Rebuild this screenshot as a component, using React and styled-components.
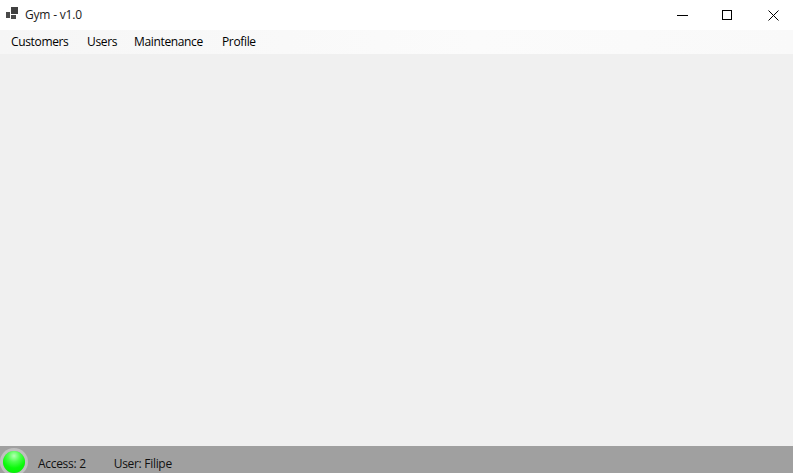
import React from 'react'
import styled, { createGlobalStyle } from 'styled-components'

const GlobalStyle = createGlobalStyle`
  html, body, #root {
    margin: 0;
    height: 100%;
  }
  body {
    overflow: hidden;
    font-family: 'Open Sans', 'Liberation Sans', sans-serif;
    font-size: 12px;
    color: #000;
  }
`

const Window = styled.div`
  display: flex;
  flex-direction: column;
  height: 100%;
  background: #f0f0f0;
`

const TitleBar = styled.div`
  display: flex;
  align-items: center;
  justify-content: space-between;
  height: 30px;
  flex-shrink: 0;
  background: #fff;
`

const TitleLeft = styled.div`
  display: flex;
  align-items: flex-start;
  gap: 6px;
  padding: 7px 0 0 6px;
  height: 30px;
  box-sizing: border-box;
`

const Title = styled.span`
  margin-top: -1px;
  color: #1a1a1a;
  letter-spacing: -0.2px;
`

const WindowButtons = styled.div`
  display: flex;
  gap: 5.5px;
`

const WindowButton = styled.div`
  width: 40px;
  height: 30px;
  display: flex;
  align-items: center;
  justify-content: center;
`

const MenuBar = styled.div`
  display: flex;
  align-items: center;
  height: 24px;
  flex-shrink: 0;
  padding: 0 0 2px 11px;
  box-sizing: border-box;
  background: linear-gradient(to right, #f6f6f6, #fbfbfb 60%, #f9f9f9);
`

const MenuItem = styled.span`
  width: ${(props) => props.$width}px;
  letter-spacing: -0.35px;
`

const Content = styled.div`
  flex: 1;
`

const StatusBar = styled.div`
  display: flex;
  align-items: center;
  height: 27px;
  flex-shrink: 0;
  background: #a0a0a0;
  overflow: hidden;
`

const Led = styled.div`
  width: 22px;
  height: 22px;
  margin: 5px 0 0 3px;
  flex-shrink: 0;
  border-radius: 50%;
  background: radial-gradient(circle at 50% 22%, #b4ffb4 0, #4cff4c 30%, #0cfa0c 60%, #00f000 100%);
  box-shadow: 0 0 0 3px #c0c0c0;
`

const StatusText = styled.span`
  margin-left: ${(props) => props.$gap}px;
  margin-top: 8px;
  color: #111;
  letter-spacing: -0.3px;
`

const App = () => {
  return (
    <Window>
      <GlobalStyle />
      <TitleBar>
        <TitleLeft>
          <svg width='13' height='13' viewBox='0 0 13 13'>
            <rect x='0' y='5' width='4' height='6' fill='#4a4a4a' />
            <rect x='5' y='0' width='7' height='7' fill='#404040' />
            <rect x='5' y='8' width='5' height='4' fill='#4a4a4a' />
          </svg>
          <Title>Gym - v1.0</Title>
        </TitleLeft>
        <WindowButtons>
          <WindowButton>
            <svg width='11' height='11' viewBox='0 0 11 11'>
              <path d='M0 5.5H11' stroke='#000' fill='none' />
            </svg>
          </WindowButton>
          <WindowButton>
            <svg width='11' height='11' viewBox='0 0 11 11'>
              <rect x='0.5' y='0.5' width='9' height='9' stroke='#000' fill='none' />
            </svg>
          </WindowButton>
          <WindowButton>
            <svg width='11' height='11' viewBox='0 0 11 11'>
              <path d='M0.5 0.5L10.5 10.5M10.5 0.5L0.5 10.5' stroke='#000' fill='none' />
            </svg>
          </WindowButton>
        </WindowButtons>
      </TitleBar>
      <MenuBar>
        <MenuItem $width={76}>Customers</MenuItem>
        <MenuItem $width={47}>Users</MenuItem>
        <MenuItem $width={88}>Maintenance</MenuItem>
        <MenuItem $width={40}>Profile</MenuItem>
      </MenuBar>
      <Content />
      <StatusBar>
        <Led />
        <StatusText $gap={13}>Access: 2</StatusText>
        <StatusText $gap={28}>User: Filipe</StatusText>
      </StatusBar>
    </Window>
  )
}

export default App
